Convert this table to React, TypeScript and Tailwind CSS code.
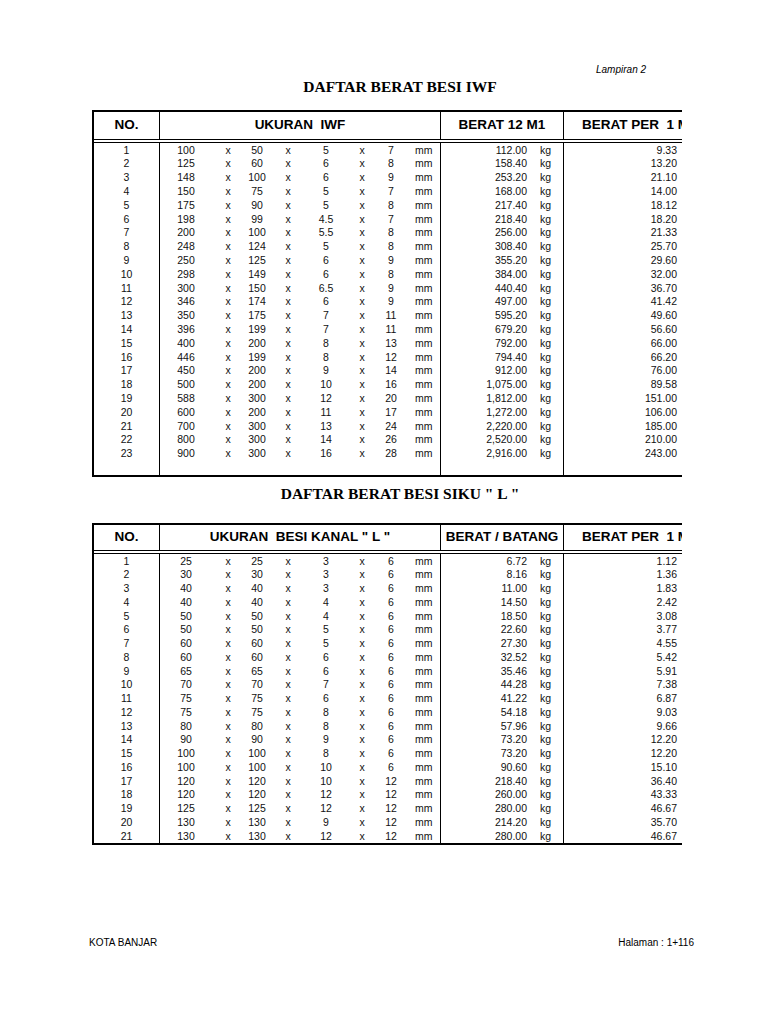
type Row = [number, string, string, string, string, string, string];

const iwf: Row[] = [
  [1, "100", "50", "5", "7", "112.00", "9.33"],
  [2, "125", "60", "6", "8", "158.40", "13.20"],
  [3, "148", "100", "6", "9", "253.20", "21.10"],
  [4, "150", "75", "5", "7", "168.00", "14.00"],
  [5, "175", "90", "5", "8", "217.40", "18.12"],
  [6, "198", "99", "4.5", "7", "218.40", "18.20"],
  [7, "200", "100", "5.5", "8", "256.00", "21.33"],
  [8, "248", "124", "5", "8", "308.40", "25.70"],
  [9, "250", "125", "6", "9", "355.20", "29.60"],
  [10, "298", "149", "6", "8", "384.00", "32.00"],
  [11, "300", "150", "6.5", "9", "440.40", "36.70"],
  [12, "346", "174", "6", "9", "497.00", "41.42"],
  [13, "350", "175", "7", "11", "595.20", "49.60"],
  [14, "396", "199", "7", "11", "679.20", "56.60"],
  [15, "400", "200", "8", "13", "792.00", "66.00"],
  [16, "446", "199", "8", "12", "794.40", "66.20"],
  [17, "450", "200", "9", "14", "912.00", "76.00"],
  [18, "500", "200", "10", "16", "1,075.00", "89.58"],
  [19, "588", "300", "12", "20", "1,812.00", "151.00"],
  [20, "600", "200", "11", "17", "1,272.00", "106.00"],
  [21, "700", "300", "13", "24", "2,220.00", "185.00"],
  [22, "800", "300", "14", "26", "2,520.00", "210.00"],
  [23, "900", "300", "16", "28", "2,916.00", "243.00"],
];

const siku: Row[] = [
  [1, "25", "25", "3", "6", "6.72", "1.12"],
  [2, "30", "30", "3", "6", "8.16", "1.36"],
  [3, "40", "40", "3", "6", "11.00", "1.83"],
  [4, "40", "40", "4", "6", "14.50", "2.42"],
  [5, "50", "50", "4", "6", "18.50", "3.08"],
  [6, "50", "50", "5", "6", "22.60", "3.77"],
  [7, "60", "60", "5", "6", "27.30", "4.55"],
  [8, "60", "60", "6", "6", "32.52", "5.42"],
  [9, "65", "65", "6", "6", "35.46", "5.91"],
  [10, "70", "70", "7", "6", "44.28", "7.38"],
  [11, "75", "75", "6", "6", "41.22", "6.87"],
  [12, "75", "75", "8", "6", "54.18", "9.03"],
  [13, "80", "80", "8", "6", "57.96", "9.66"],
  [14, "90", "90", "9", "6", "73.20", "12.20"],
  [15, "100", "100", "8", "6", "73.20", "12.20"],
  [16, "100", "100", "10", "6", "90.60", "15.10"],
  [17, "120", "120", "10", "12", "218.40", "36.40"],
  [18, "120", "120", "12", "12", "260.00", "43.33"],
  [19, "125", "125", "12", "12", "280.00", "46.67"],
  [20, "130", "130", "9", "12", "214.20", "35.70"],
  [21, "130", "130", "12", "12", "280.00", "46.67"],
];

// widths of the 4 sheet columns (after the 2px left border)
const cols = "grid grid-cols-[65px_281px_123px_114px]";

function DataRow({ row, h }: { row?: Row; h: string }) {
  return (
    <div className={`${cols} ${h} items-center leading-none`}>
      <div className="text-center">{row?.[0]}</div>
      <div className="h-full border-l-[1.5px] border-black grid grid-cols-[52px_32px_26px_36px_40px_32px_26px_36px] items-center text-center">
        {row && (
          <>
            <span>{row[1]}</span>
            <span>x</span>
            <span>{row[2]}</span>
            <span>x</span>
            <span>{row[3]}</span>
            <span>x</span>
            <span>{row[4]}</span>
            <span className="text-left pl-[11px]">mm</span>
          </>
        )}
      </div>
      <div className="h-full border-l-[1.5px] border-black grid grid-cols-[86px_37px] items-center">
        {row && (
          <>
            <span className="text-right">{row[5]}</span>
            <span className="pl-[13px]">kg</span>
          </>
        )}
      </div>
      <div className="h-full border-l-[1.5px] border-black flex items-center justify-end">
        {row?.[6]}
      </div>
    </div>
  );
}

function Sheet({
  size,
  headH,
  rowH,
  rows,
  tail,
}: {
  size: string;
  headH: string;
  rowH: string;
  rows: Row[];
  tail?: string;
}) {
  return (
    <div className="ml-[92px] w-[590px] overflow-hidden">
      <div className="w-[640px] border-t-2 border-l-2 border-b-2 border-black">
        <div className={`${cols} ${headH} items-center font-bold text-[13.5px] whitespace-pre`}>
          <div className="text-center">NO.</div>
          <div className="h-full border-l-[1.5px] border-black flex items-center justify-center">
            {size}
          </div>
          <div className="h-full border-l-[1.5px] border-black flex items-center justify-center">
            {rowH === "h-[13.8px]" ? "BERAT 12 M1" : "BERAT / BATANG"}
          </div>
          <div className="h-full border-l-[1.5px] border-black flex items-center pl-[18px] w-[200px]">
            BERAT PER  1 M1
          </div>
        </div>
        <div className="h-[4px] border-t border-b border-black" />
        <div className="text-[10.5px] text-[#111]">
          {rows.map((r) => (
            <DataRow key={r[0]} row={r} h={rowH} />
          ))}
          {tail && <DataRow h={tail} />}
        </div>
      </div>
    </div>
  );
}

export default function App() {
  return (
    <div className="w-[768px] h-[1024px] bg-white text-black font-['Liberation_Sans',Arial,sans-serif] pt-[64px] flex flex-col">
      <p className="pl-[596px] text-[10px] leading-[12px] italic">Lampiran 2</p>

      <h1 className="mt-[2px] ml-[92px] w-[616px] text-center font-['Liberation_Serif','Times_New_Roman',serif] font-bold text-[15.5px] leading-[18px]">
        DAFTAR BERAT BESI IWF
      </h1>

      <div className="mt-[14px]">
        <Sheet size="UKURAN  IWF" headH="h-[27px]" rowH="h-[13.8px]" rows={iwf} tail="h-[14.6px]" />
      </div>

      <h2 className="mt-[8px] ml-[92px] w-[616px] text-center font-['Liberation_Serif','Times_New_Roman',serif] font-bold text-[15.5px] leading-[18px] whitespace-pre">
        DAFTAR BERAT BESI SIKU " L "
      </h2>

      <div className="mt-[20px]">
        <Sheet size={'UKURAN  BESI KANAL " L "'} headH="h-[25px]" rowH="h-[13.76px]" rows={siku} />
      </div>

      <div className="mt-[92px] pl-[89px] pr-[74px] flex justify-between text-[10px] leading-[12px]">
        <span>KOTA BANJAR</span>
        <span>Halaman : 1+116</span>
      </div>
    </div>
  );
}
